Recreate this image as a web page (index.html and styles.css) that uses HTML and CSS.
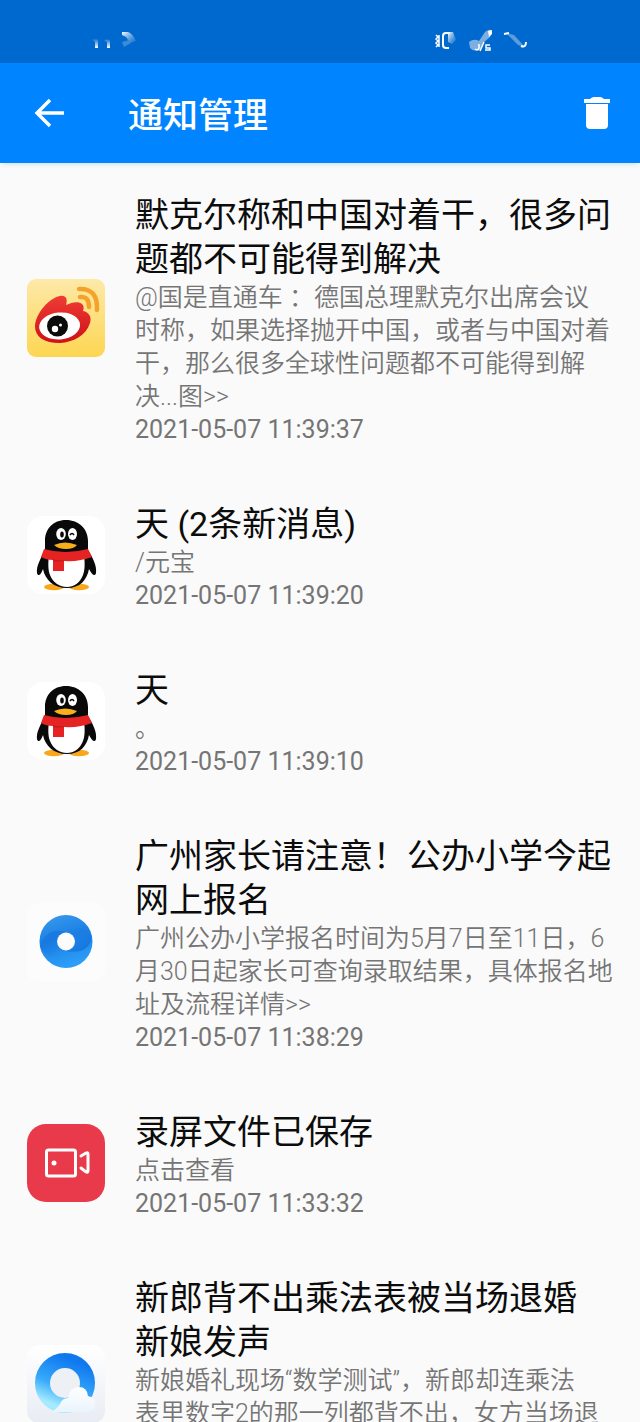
FILE: index.html
```html
<!DOCTYPE html>
<html lang="zh-CN">
<head>
  <meta charset="UTF-8" />
  <meta name="viewport" content="width=device-width, initial-scale=1.0" />
  <title>通知管理</title>
  <link rel="stylesheet" href="styles.css">
</head>
<body>
  <div class="status-bar">
    <svg class="status-left" width="56" height="24" viewBox="0 0 56 24" aria-hidden="true">
      <defs>
        <linearGradient id="fadeUp" x1="0" y1="1" x2="0" y2="0">
          <stop offset="0" stop-color="#fff" />
          <stop offset="1" stop-color="#fff" stop-opacity="0" />
        </linearGradient>
        <linearGradient id="fadeRight" x1="0" y1="0" x2="1" y2="1">
          <stop offset="0" stop-color="#fff" />
          <stop offset="1" stop-color="#5c9fdd" stop-opacity="0.2" />
        </linearGradient>
      </defs>
      <path d="M10 9q6-2 6 2v7h-3v-6zM22 10q6-2 6 2v6h-3v-6z" fill="url(#fadeUp)" />
      <path d="M40 2h6q5 2 8 9l-6 2-4-6-4-2z" fill="url(#fadeRight)" />
      <path d="M40 12l2 5 7-4-2-3z" fill="#3a8bd6" />
    </svg>
    <svg class="status-right" width="98" height="28" viewBox="0 0 98 28" aria-hidden="true">
      <path d="M2 7l2 2-2 2 2 2-2 2 2 2-2 2M5 7v12" fill="none" stroke="#fff" stroke-width="1.5" />
      <path d="M16 5h-4q-3 0-3 3v9q0 3 3 3h3" fill="none" stroke="#fff" stroke-width="2" />
      <path d="M14 4h5l3 8-4 4-4-2z" fill="url(#fadeRight)" />
      <path d="M35 14q5-4 10-1l6-9q5-4 7-1l-2 6-7 6-3 7q-7 2-10-2z" fill="#a5c5e4" opacity="0.75" />
      <path d="M54 3l4-1v4l-3 3z" fill="#fff" />
      <path d="M41 21q3 2 4-1v-4M50 14l-4 9M56 17h-4v3h4v2h-5" fill="none" stroke="#fff" stroke-width="1.5" />
      <path d="M72 5l8 2 11 12-7-2z" fill="#8fb9e2" opacity="0.65" />
      <path d="M70 6l5-1M87 18q5 2 5-4" fill="none" stroke="#fff" stroke-width="2" />
    </svg>
  </div>

  <header class="toolbar">
    <button class="icon-button" type="button" aria-label="返回">
      <svg width="32" height="32" viewBox="0 0 32 32">
        <path d="M30 16H4M16 3L3 16l13 13" fill="none" stroke="#fff" stroke-width="3.4" />
      </svg>
    </button>
    <h1 class="toolbar-title">通知管理</h1>
    <button class="icon-button" type="button" aria-label="清空">
      <svg width="26" height="34" viewBox="0 0 26 34">
        <path d="M0 3h6q2-2 4-2h6q2 0 4 2h6v4H0zM2 8h22v21q0 4-4 4H6q-4 0-4-4z" fill="#fff" />
      </svg>
    </button>
  </header>

  <!-- shared artwork, QQ appears twice -->
  <svg class="sprite" aria-hidden="true">
    <symbol id="qq" viewBox="0 0 78 78">
      <rect width="78" height="78" rx="16" fill="#fff" />
      <ellipse cx="27" cy="71" rx="10" ry="3.2" fill="#f9a71c" />
      <ellipse cx="52" cy="71" rx="10" ry="3.2" fill="#f9a71c" />
      <path d="M39 4C26 4 18 13 18 25v9C14 42 9 50 10 57c1 4 4 2 6-4 2 11 11 19 24 19s20-8 22-19c3 6 6 8 7 4 1-7-3-15-8-23V25C61 13 52 4 39 4z" fill="#090909" />
      <path d="M22 39h35c1 8 1 15-1 20-3 8-9 12-16 12s-14-4-17-12c-2-5-2-12-1-20z" fill="#fff" />
      <path d="M17 33q21 6 44 0l4 8q-13 5-28 4v10H26V44q-7 0-12-3z" fill="#e62323" />
      <path d="M26 43v2q5 1 11 0v-1q-6 1-11-1z" fill="#c81a1e" />
      <ellipse cx="34" cy="18" rx="4.8" ry="6" fill="#fff" />
      <ellipse cx="45.5" cy="18" rx="4.5" ry="6" fill="#fff" />
      <ellipse cx="35" cy="18.5" rx="1.8" ry="3" fill="#090909" />
      <path d="M43 19q2-3 4 0" fill="none" stroke="#090909" stroke-width="1.6" />
      <path d="M27 29q11-5 23 0-3 4-11 4t-12-4z" fill="#f9ae1b" />
    </symbol>
  </svg>

  <main class="notice-list">
    <article class="notice">
      <svg class="app-icon" viewBox="0 0 78 78" role="img" aria-label="微博">
        <defs>
          <linearGradient id="weiboBg" x1="0" y1="0" x2="0" y2="1">
            <stop offset="0" stop-color="#fde9a9" />
            <stop offset="1" stop-color="#fdd651" />
          </linearGradient>
          <linearGradient id="weiboRed" x1="0" y1="0" x2="0" y2="1">
            <stop offset="0" stop-color="#ef3c35" />
            <stop offset="1" stop-color="#cf1018" />
          </linearGradient>
        </defs>
        <rect width="78" height="78" rx="9" fill="url(#weiboBg)" />
        <path d="M8 47C9 34 22 19 33 17c6-1 8 3 6 9 6-3 13-4 16-1 2 2 2 4 1 7 6 1 9 6 7 12-4 13-17 19-30 20C17 64 8 58 8 47z" fill="url(#weiboRed)" />
        <ellipse cx="32.5" cy="47" rx="20.5" ry="13.5" fill="#fff" transform="rotate(-5 32 46)" />
        <circle cx="30.5" cy="47" r="10.5" fill="#0b0b0b" />
        <circle cx="28" cy="50" r="3.2" fill="#fff" />
        <circle cx="33.5" cy="46" r="1.5" fill="#fff" />
        <path d="M53 18q9-1 9 10M52 10q19-1 18 21" fill="none" stroke="#f3a32b" stroke-width="4.5" stroke-linecap="round" />
      </svg>
      <div class="notice-text">
        <h2 class="notice-title">默克尔称和中国对着干，很多问题都不可能得到解决</h2>
        <p class="notice-body">@国是直通车 ：德国总理默克尔出席会议<br>时称，如果选择抛开中国，或者与中国对着<br>干，那么很多全球性问题都不可能得到解<br>决...图&gt;&gt;</p>
        <time class="notice-time" datetime="2021-05-07T11:39:37">2021-05-07 11:39:37</time>
      </div>
    </article>

    <article class="notice">
      <svg class="app-icon" role="img" aria-label="QQ"><use href="#qq" /></svg>
      <div class="notice-text">
        <h2 class="notice-title">天 (2条新消息)</h2>
        <p class="notice-body">/元宝</p>
        <time class="notice-time" datetime="2021-05-07T11:39:20">2021-05-07 11:39:20</time>
      </div>
    </article>

    <article class="notice">
      <svg class="app-icon" role="img" aria-label="QQ"><use href="#qq" /></svg>
      <div class="notice-text">
        <h2 class="notice-title">天</h2>
        <p class="notice-body">。</p>
        <time class="notice-time" datetime="2021-05-07T11:39:10">2021-05-07 11:39:10</time>
      </div>
    </article>

    <article class="notice">
      <svg class="app-icon" viewBox="0 0 78 78" role="img" aria-label="浏览器">
        <defs>
          <linearGradient id="ringBase" x1="0" y1="0" x2="0.3" y2="1">
            <stop offset="0" stop-color="#3a9dee" />
            <stop offset="0.5" stop-color="#1c80e4" />
            <stop offset="1" stop-color="#2b9cf7" />
          </linearGradient>
          <linearGradient id="ringEdgeLeft" x1="0" y1="0" x2="0.6" y2="1">
            <stop offset="0" stop-color="#1475de" />
            <stop offset="1" stop-color="#1475de" stop-opacity="0" />
          </linearGradient>
          <linearGradient id="ringEdgeRight" x1="1" y1="1" x2="0.4" y2="0">
            <stop offset="0" stop-color="#1270da" />
            <stop offset="1" stop-color="#1270da" stop-opacity="0" />
          </linearGradient>
        </defs>
        <rect width="78" height="78" rx="10" fill="#fcfcfc" />
        <circle cx="39" cy="38.5" r="26.5" fill="url(#ringBase)" />
        <path d="M13 43C17 30 27 25 39 29L39 50C32 58 20 56 13 43z" fill="url(#ringEdgeLeft)" />
        <path d="M65 34C63 46 53 51 39 48L39 27C48 22 60 24 65 34z" fill="url(#ringEdgeRight)" />
        <circle cx="39" cy="38.5" r="9" fill="#fcfcfc" />
      </svg>
      <div class="notice-text">
        <h2 class="notice-title">广州家长请注意！公办小学今起网上报名</h2>
        <p class="notice-body">广州公办小学报名时间为5月7日至11日，6<br>月30日起家长可查询录取结果，具体报名地<br>址及流程详情&gt;&gt;</p>
        <time class="notice-time" datetime="2021-05-07T11:38:29">2021-05-07 11:38:29</time>
      </div>
    </article>

    <article class="notice">
      <svg class="app-icon" viewBox="0 0 78 78" role="img" aria-label="录屏">
        <rect width="78" height="78" rx="19" fill="#e83a4b" />
        <rect x="19.5" y="26" width="29" height="26" rx="2" fill="none" stroke="#fff" stroke-width="3" />
        <circle cx="27" cy="39" r="2.5" fill="#fff" />
        <path d="M54 32l5-3q2-1 2 1v17q0 2-2 1l-5-4" fill="none" stroke="#fff" stroke-width="3" stroke-linecap="round" />
      </svg>
      <div class="notice-text">
        <h2 class="notice-title">录屏文件已保存</h2>
        <p class="notice-body">点击查看</p>
        <time class="notice-time" datetime="2021-05-07T11:33:32">2021-05-07 11:33:32</time>
      </div>
    </article>

    <article class="notice">
      <svg class="app-icon" viewBox="0 0 78 78" role="img" aria-label="QQ浏览器">
        <defs>
          <linearGradient id="qbBg" x1="0" y1="0" x2="0" y2="1">
            <stop offset="0" stop-color="#fff" />
            <stop offset="1" stop-color="#e8ecf3" />
          </linearGradient>
          <linearGradient id="qbRing" x1="0.3" y1="1" x2="0.7" y2="0">
            <stop offset="0" stop-color="#a5ebff" />
            <stop offset="0.4" stop-color="#36aafb" />
            <stop offset="1" stop-color="#0f78ee" />
          </linearGradient>
          <linearGradient id="qbCloud" x1="0" y1="0" x2="0" y2="1">
            <stop offset="0" stop-color="#fff" />
            <stop offset="1" stop-color="#eaf4fc" />
          </linearGradient>
        </defs>
        <rect width="78" height="78" rx="12" fill="url(#qbBg)" />
        <circle cx="38" cy="38" r="22.5" fill="#edf0f5" stroke="url(#qbRing)" stroke-width="15" />
        <path d="M24 67q6-3 9-8 2-6 8-6 2-11 11-11 8 0 9 9 7 1 7 8 0 8-8 8z" fill="url(#qbCloud)" />
      </svg>
      <div class="notice-text">
        <h2 class="notice-title">新郎背不出乘法表被当场退婚<br>新娘发声</h2>
        <p class="notice-body">新娘婚礼现场“数学测试”，新郎却连乘法<br>表里数字2的那一列都背不出，女方当场退<br>婚&gt;&gt;</p>
        <time class="notice-time" datetime="2021-05-07">2021-05-07</time>
      </div>
    </article>
  </main>
</body>
</html>
```
FILE: styles.css
```css
* {
  box-sizing: border-box;
}

body {
  display: flex;
  flex-direction: column;
  height: 100vh;
  margin: 0;
  overflow: hidden;
  background: #fafafa;
  color: #0c0c0c;
  font-family: Roboto, "Noto Sans CJK SC", sans-serif;
}

h1,
h2,
p {
  margin: 0;
  font-weight: 400;
}

.sprite {
  position: absolute;
  width: 0;
  height: 0;
}

.status-bar {
  display: flex;
  flex: none;
  justify-content: space-between;
  height: 63px;
  padding: 28px 108px 0 82px;
  background: #0069cf;
}

.status-left,
.status-right {
  filter: blur(0.5px);
}

.status-left {
  margin-top: 2px;
}

.toolbar {
  display: flex;
  flex: none;
  align-items: center;
  height: 100px;
  padding: 0 30px 0 34px;
  background: #0084ff;
  box-shadow: 0 4px 4px -2px #d5e8ee;
  z-index: 1;
}

.toolbar-title {
  flex: 1;
  margin-left: 62px;
  padding-top: 8px;
  color: #fff;
  font-size: 35px;
  font-weight: 500;
  line-height: 44px;
}

.icon-button {
  display: flex;
  padding: 0;
  border: none;
  background: none;
  cursor: pointer;
}

.notice-list {
  flex: 1;
  min-height: 0;
  overflow: hidden;
}

.notice {
  display: flex;
  align-items: center;
  gap: 30px;
  padding: 26px 24px 26px 27px;
}

.app-icon {
  flex: none;
  width: 78px;
  height: 78px;
}

.notice-text {
  flex: 1;
  min-width: 0;
  padding-top: 4px;
}

.notice-title {
  font-size: 34px;
  line-height: 44px;
}

.notice-body,
.notice-time {
  display: block;
  color: #757575;
  font-size: 25px;
  line-height: 33px;
}

.notice-body {
  font-weight: 350;
}
```
